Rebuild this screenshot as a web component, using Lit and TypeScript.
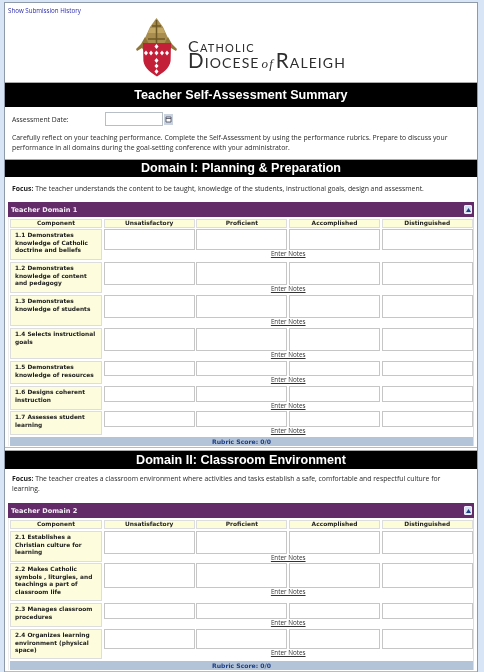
import { LitElement, html, css, svg } from "lit";
import { customElement } from "lit/decorators.js";

interface Row { t: string; h: number; b: number; }
const D1: Row[] = [
  { t: "1.1 Demonstrates knowledge of Catholic doctrine and beliefs", h: 31, b: 21 },
  { t: "1.2 Demonstrates knowledge of content and pedagogy", h: 31, b: 23 },
  { t: "1.3 Demonstrates knowledge of students", h: 31, b: 23 },
  { t: "1.4 Selects instructional goals", h: 31, b: 23 },
  { t: "1.5 Demonstrates knowledge of resources", h: 23, b: 15 },
  { t: "1.6 Designs coherent instruction", h: 23, b: 16 },
  { t: "1.7 Assesses student learning", h: 24, b: 16 },
];
const D2: Row[] = [
  { t: "2.1 Establishes a Christian culture for learning", h: 30, b: 23 },
  { t: "2.2 Makes Catholic symbols , liturgies, and teachings a part of classroom life", h: 38, b: 25 },
  { t: "2.3 Manages classroom procedures", h: 24, b: 16 },
  { t: "2.4 Organizes learning environment (physical space)", h: 30, b: 20 },
];
const HEADS = ["Component", "Unsatisfactory", "Proficient", "Accomplished", "Distinguished"];

const diamonds: [number, number][] = [
  [20.5, 28.5], [20.5, 35], [20.5, 42.5], [20.5, 48], [20.5, 53.5],
  [10, 35], [15, 35], [26, 35], [31, 35],
];

const logo = svg`
  <path d="M20.5 0 L27 9 L32 20 L33 27 L8 27 L9 20 L14 9 Z" fill="#a88d4f"/>
  <path d="M14 10 L27 10 L29 15 L12 15 Z" fill="#c2a764"/>
  <path d="M20.5 2 L20.5 26 M16 8 L25 8 M12 21 L29 21" stroke="#6e5826" stroke-width="1.5" fill="none"/>
  <path d="M0 31 L5 26 L9 19 L13 26 L8 33 L6 30 L1 33 Z M41 31 L36 26 L32 19 L28 26 L33 33 L35 30 L40 33 Z" fill="#8f7638"/>
  <path d="M7 25 L35 25 L34.6 43 C33.5 51 26 55 21 58.5 C16 55 8.5 51 7.4 43 Z" fill="#c41f39"/>
  ${diamonds.map(([x, y]) => svg`<path d="M${x} ${y - 2.4} L${x + 2} ${y} L${x} ${y + 2.4} L${x - 2} ${y} Z" fill="#fff"/>`)}
`;

@customElement("app-root")
export class AppRoot extends LitElement {
  static styles = css`
    :host { display: block; height: 672px; overflow: hidden; box-sizing: border-box; padding: 2px 6px 0 4px;
      background: #d7e5f7; font-family: "Open Sans", "Noto Sans", sans-serif; font-size: 6.85px; color: #2a2a2a; filter: blur(0.3px); }
    .panel { background: #fff; border: 1px solid #8e9aa8; height: 720px; }
    .link { padding: 3px 3px 0; height: 11px; color: #2a2ab0; font-size: 6.2px; line-height: 9px; }
    .logo { display: flex; justify-content: center; align-items: flex-end; gap: 11px; height: 60px; padding-top: 1px; }
    .logo svg { display: block; width: 41px; height: 60px; }
    .lt { color: #2e2e2e; font-family: "Lato", sans-serif; font-variant: small-caps; padding-bottom: 6px; }
    .lt div { line-height: 12px; }
    .l1 { font-size: 16px; letter-spacing: 1.2px; }
    .l2 { font-size: 20.5px; letter-spacing: 1.1px; line-height: 17px !important; white-space: nowrap; }
    .l2 i { font-family: "Liberation Serif", serif; font-size: 13px; font-variant: normal; margin: 0 2px; }
    .black { background: #000; color: #fff; font-family: "Liberation Sans", sans-serif; font-weight: 700; text-align: center; border-top: 1px solid #aaa; }
    .title { margin-top: 4px; height: 24px; line-height: 24px; font-size: 12.6px; }
    .dom1 { margin-top: 5px; height: 17px; line-height: 17px; font-size: 12.6px; }
    .dom2 { margin-top: 2px; height: 18px; line-height: 18px; font-size: 12.6px; }
    .date { display: flex; align-items: center; height: 14px; margin-top: 5px; padding-left: 7px; }
    .date label { width: 93px; }
    .date .in { width: 56px; height: 12px; border: 1px solid #b8bec6; background: #fff; }
    .cal { width: 9px; height: 11px; margin-left: 1px; background: #c9d3df; color: #445; display: flex; align-items: center; justify-content: center; }
    .cal svg { width: 7px; height: 7px; display: block; }
    .intro { margin: 7px 7px 0; line-height: 10px; height: 21px; white-space: nowrap; }
    .focus { padding: 0 7px; line-height: 10px; white-space: nowrap; }
    .focus b { font-weight: 700; color: #222; }
    .f1 { margin-top: 7px; height: 11px; }
    .f2 { margin-top: 5px; height: 22px; }
    .box { margin: 7px 3px 0; }
    .bar { background: #642b69; color: #f4eef6; height: 15px; display: flex; align-items: center; justify-content: space-between;
      padding: 0 2px 0 3px; font-family: "DejaVu Sans", sans-serif; font-weight: 700; font-size: 6.6px; }
    .toggle { width: 8px; height: 9px; background: #d6e2f2; border: 1px solid #eef; box-sizing: border-box; display: flex; align-items: center; justify-content: center; border-radius: 1px; }
    .toggle svg { width: 5px; height: 4px; display: block; }
    .table { border-right: 1.5px solid #ddd; border-left: 1px solid #eee; padding: 2px 0 0 1px; }
    .head, .row { display: grid; grid-template-columns: 92px repeat(4, 91px); column-gap: 1.7px; }
    .head { height: 9px; margin-bottom: 1px; }
    .t2 .head { margin-bottom: 2px; }
    .head div { background: #fdfdd9; border: 1px solid #ddd; box-sizing: border-box; text-align: center; font-family: "DejaVu Sans", sans-serif;
      font-weight: 700; font-size: 5.9px; line-height: 7px; color: #1e1e1e; }
    .row { margin-bottom: 2px; grid-template-rows: auto 1fr; }
    .comp { grid-row: 1 / span 2; background: #fdfdde; border: 1px solid #ddd; box-sizing: border-box; padding: 2px 3px 0 4px; font-family: "DejaVu Sans", sans-serif;
      font-weight: 700; font-size: 5.85px; line-height: 7.7px; color: #1a1a1a; }
    .cell { border: 1px solid #c6c6c6; box-sizing: border-box; background: #fff; }
    .notes { grid-column: 2 / span 4; text-align: center; font-size: 6.3px; line-height: 8px; color: #333; text-decoration: underline; }
    .score { background: #b3c4d9; color: #1d3f86; height: 9px; line-height: 9px; text-align: center; font-family: "DejaVu Sans", sans-serif; font-weight: 700; font-size: 6.1px; }
    .pad { height: 1px; border-bottom: 1px solid #bbb; margin: 0 -3px; }
  `;

  private table(title: string, rows: Row[], cls: string) {
    return html`
      <div class="box ${cls}">
        <div class="bar"><span>${title}</span>
          <span class="toggle"><svg viewBox="0 0 5 4"><path d="M2.5 0 L5 4 L0 4 Z" fill="#1d3f86"/></svg></span>
        </div>
        <div class="table">
          <div class="head">${HEADS.map((h) => html`<div>${h}</div>`)}</div>
          ${rows.map((r) => html`
            <div class="row" style="height:${r.h}px">
              <div class="comp">${r.t}</div>
              ${[0, 1, 2, 3].map(() => html`<div class="cell" style="height:${r.b}px"></div>`)}
              <div class="notes">Enter Notes</div>
            </div>`)}
          <div class="score">Rubric Score: 0/0</div>
        </div>
        <div class="pad"></div>
      </div>`;
  }

  render() {
    return html`
      <div class="panel">
        <div class="link">Show Submission History</div>
        <div class="logo">
          <svg viewBox="0 0 41 60">${logo}</svg>
          <div class="lt">
            <div class="l1">Catholic</div>
            <div class="l2">Diocese<i>of</i>Raleigh</div>
          </div>
        </div>
        <div class="black title">Teacher Self-Assessment Summary</div>
        <div class="date"><label>Assessment Date:</label><div class="in"></div>
          <div class="cal"><svg viewBox="0 0 7 7"><path d="M1 1 H6 V6 H1 Z M1 2.5 H6" stroke="#445" stroke-width="0.8" fill="#fff"/></svg></div>
        </div>
        <div class="intro">Carefully reflect on your teaching performance. Complete the Self-Assessment by using the performance rubrics. Prepare to discuss your<br>performance in all domains during the goal-setting conference with your administrator.</div>
        <div class="black dom1">Domain I: Planning &amp; Preparation</div>
        <div class="focus f1"><b>Focus:</b> The teacher understands the content to be taught, knowledge of the students, instructional goals, design and assessment.</div>
        ${this.table("Teacher Domain 1", D1, "t1")}
        <div class="black dom2">Domain II: Classroom Environment</div>
        <div class="focus f2"><b>Focus:</b> The teacher creates a classroom environment where activities and tasks establish a safe, comfortable and respectful culture for<br>learning.</div>
        ${this.table("Teacher Domain 2", D2, "t2")}
      </div>`;
  }
}
